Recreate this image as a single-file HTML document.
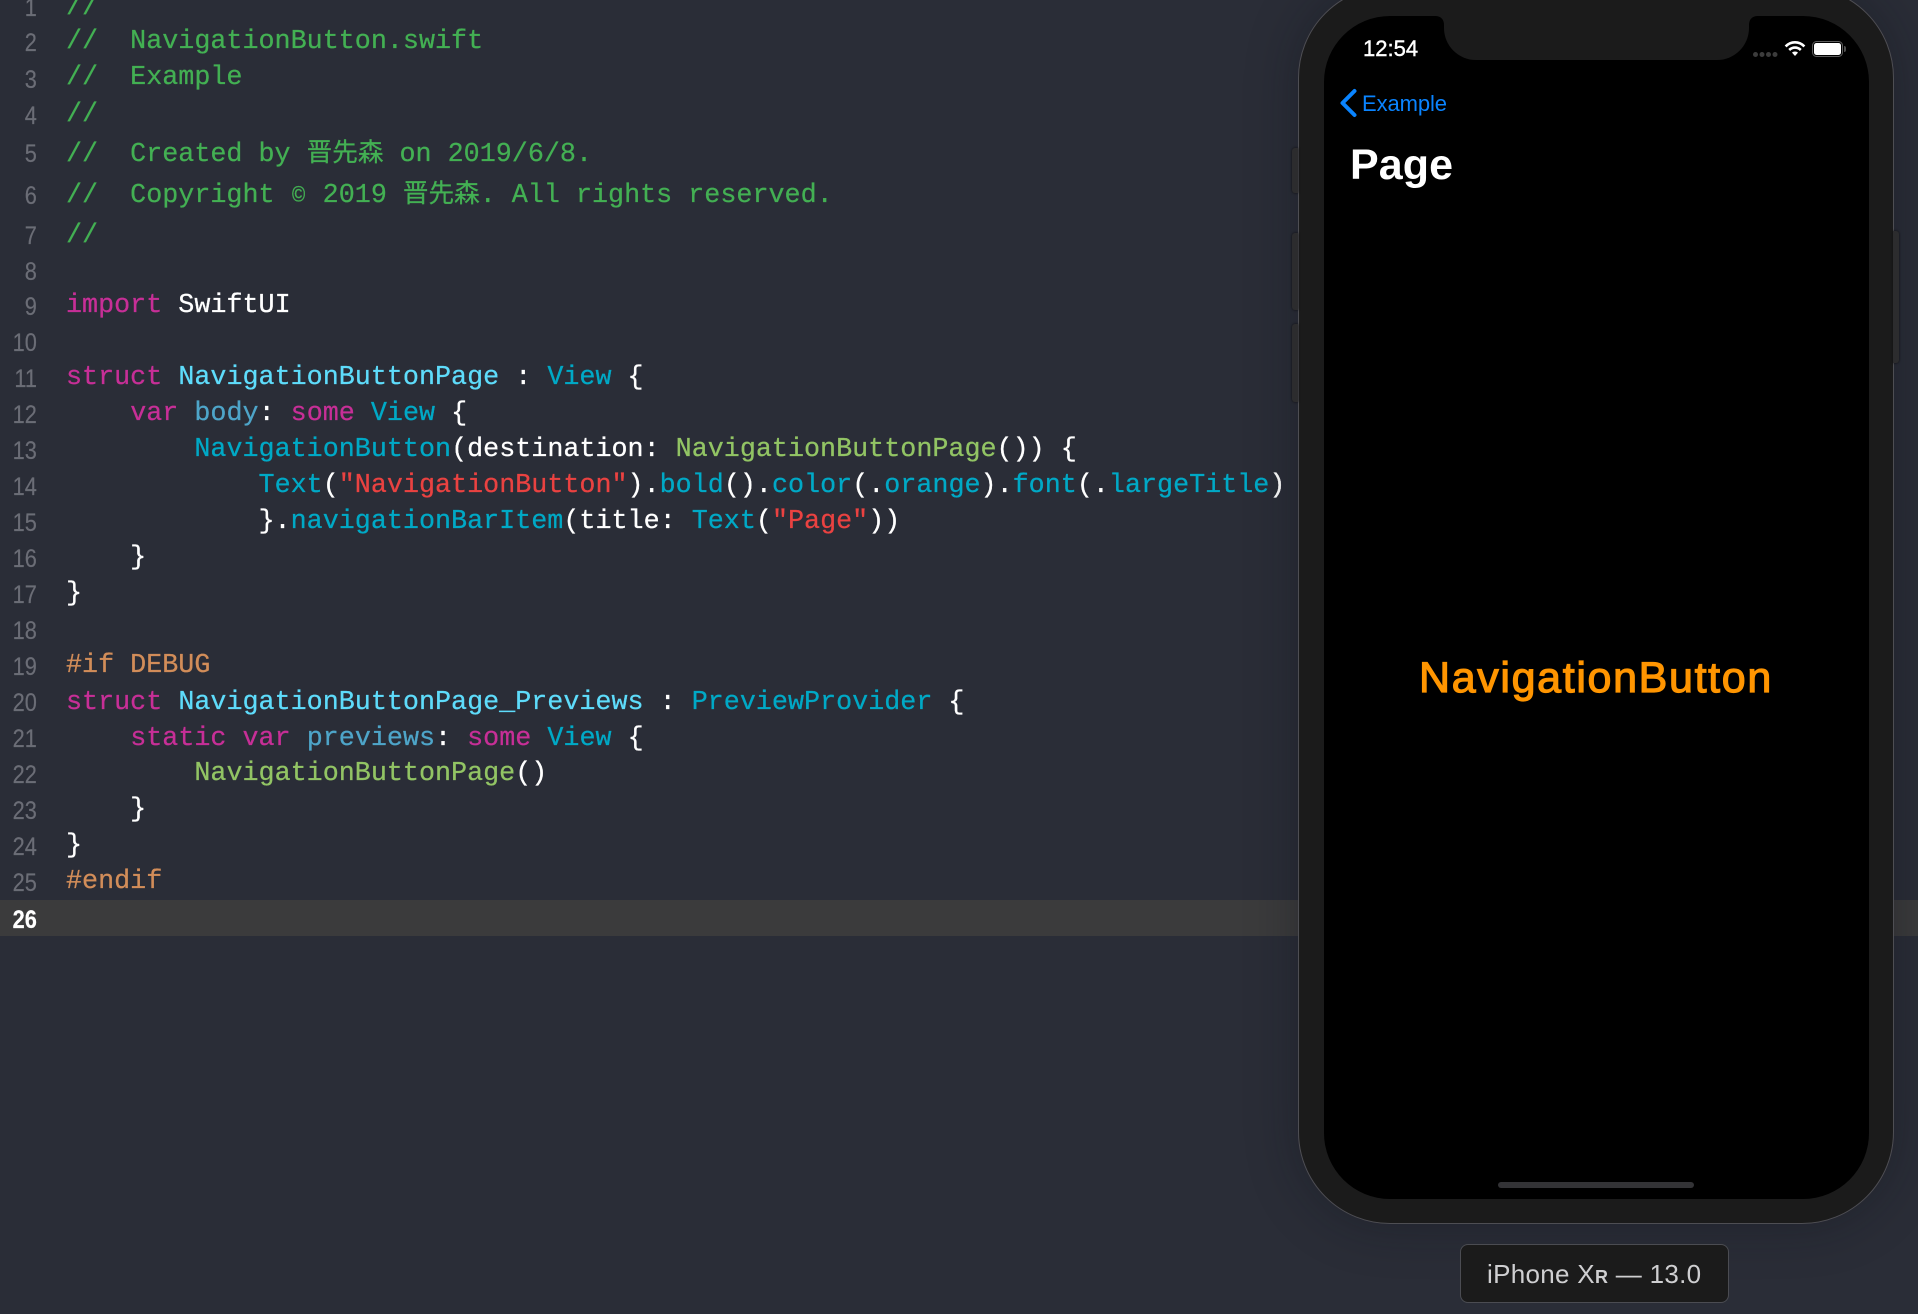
<!DOCTYPE html>
<html><head><meta charset="utf-8"><style>
html,body{margin:0;padding:0;background:#2a2d37;}
body{width:1918px;height:1314px;position:relative;overflow:hidden;font-family:"Liberation Sans","Noto Sans CJK SC",sans-serif;}
.hl{position:absolute;left:0;top:900px;width:1918px;height:36px;background:#3b3b3c;}
.l{position:absolute;left:66px;height:36px;line-height:36px;white-space:pre;font-family:"Liberation Mono","Noto Sans CJK SC",monospace;font-size:26.74px;color:#fff;-webkit-text-stroke:.25px currentColor;}
.l i{font-style:normal;font-size:25.6px;}
.n{position:absolute;right:1881px;height:36px;line-height:36px;font-size:25px;color:#6b6d76;transform:scaleX(.87);transform-origin:right center;white-space:pre;-webkit-text-stroke:.2px currentColor;}
.c{color:#43b053}.k{color:#c72f97}.t{color:#00a9c6}.d{color:#5edcfb}.g{color:#92c464}.s{color:#ea4241}.p{color:#d28d59}.b{color:#4ea5c9}
.ab{position:absolute;}
.phone{left:1298px;top:-14px;width:596px;height:1238px;box-sizing:border-box;background:#1b1b1b;border:1px solid #4e4e53;border-radius:92px;box-shadow:0 0 50px rgba(14,16,26,.36);}
.sb{background:#2c2c2e;box-shadow:0 0 2px #0e0e10;}
.screen{left:1323.5px;top:16px;width:545.5px;height:1183px;background:#000;border-radius:66px;overflow:hidden;}
.notch{left:1443.5px;top:16px;width:305px;height:43.5px;background:#1b1b1b;border-radius:0 0 32px 32px;}
.nc{top:16px;width:9px;height:9px;}
</style></head><body>
<div class="hl"></div>

<div class="n" style="top:-10px">1</div><div class="l c" style="top:-10px">//</div>
<div class="n" style="top:25px">2</div><div class="l c" style="top:24px">//  NavigationButton.swift</div>
<div class="n" style="top:62px">3</div><div class="l c" style="top:60px">//  Example</div>
<div class="n" style="top:98px">4</div><div class="l c" style="top:97px">//</div>
<div class="n" style="top:136px">5</div><div class="l c" style="top:137px">//  Created by <i>晋先森</i> on 2019/6/8.</div>
<div class="n" style="top:178px">6</div><div class="l c" style="top:178px">//  Copyright <span style="display:inline-block;width:16.04px;text-align:center;font-size:22px;line-height:20px">©</span> 2019 <i>晋先森</i>. All rights reserved.</div>
<div class="n" style="top:218px">7</div><div class="l c" style="top:218px">//</div>
<div class="n" style="top:254px">8</div>
<div class="n" style="top:289px">9</div><div class="l" style="top:288px"><span class="k">import</span> SwiftUI</div>
<div class="n" style="top:325px">10</div>
<div class="n" style="top:361px">11</div><div class="l" style="top:360px"><span class="k">struct</span> <span class="d">NavigationButtonPage</span> : <span class="t">View</span> {</div>
<div class="n" style="top:397px">12</div><div class="l" style="top:396px">    <span class="k">var</span> <span class="b">body</span>: <span class="k">some</span> <span class="t">View</span> {</div>
<div class="n" style="top:433px">13</div><div class="l" style="top:432px">        <span class="t">NavigationButton</span>(destination: <span class="g">NavigationButtonPage</span>()) {</div>
<div class="n" style="top:469px">14</div><div class="l" style="top:468px">            <span class="t">Text</span>(<span class="s">"NavigationButton"</span>).<span class="t">bold</span>().<span class="t">color</span>(.<span class="t">orange</span>).<span class="t">font</span>(.<span class="t">largeTitle</span>)</div>
<div class="n" style="top:505px">15</div><div class="l" style="top:504px">            }.<span class="t">navigationBarItem</span>(title: <span class="t">Text</span>(<span class="s">"Page"</span>))</div>
<div class="n" style="top:541px">16</div><div class="l" style="top:540px">    }</div>
<div class="n" style="top:577px">17</div><div class="l" style="top:576px">}</div>
<div class="n" style="top:613px">18</div>
<div class="n" style="top:649px">19</div><div class="l p" style="top:648px">#if DEBUG</div>
<div class="n" style="top:685px">20</div><div class="l" style="top:685px"><span class="k">struct</span> <span class="d">NavigationButtonPage_Previews</span> : <span class="t">PreviewProvider</span> {</div>
<div class="n" style="top:721px">21</div><div class="l" style="top:721px">    <span class="k">static</span> <span class="k">var</span> <span class="b">previews</span>: <span class="k">some</span> <span class="t">View</span> {</div>
<div class="n" style="top:757px">22</div><div class="l" style="top:756px">        <span class="g">NavigationButtonPage</span>()</div>
<div class="n" style="top:793px">23</div><div class="l" style="top:792px">    }</div>
<div class="n" style="top:829px">24</div><div class="l" style="top:828px">}</div>
<div class="n" style="top:865px">25</div><div class="l p" style="top:864px">#endif</div>
<div class="n" style="top:902px;color:#fff;font-weight:bold">26</div>

<div class="ab phone"></div>
<div class="ab sb" style="left:1292px;top:148px;width:6px;height:45px;border-radius:3px 0 0 3px"></div>
<div class="ab sb" style="left:1292px;top:233px;width:6px;height:77px;border-radius:3px 0 0 3px"></div>
<div class="ab sb" style="left:1292px;top:324px;width:6px;height:78px;border-radius:3px 0 0 3px"></div>
<div class="ab sb" style="left:1893px;top:231px;width:6px;height:132px;border-radius:0 3px 3px 0"></div>

<div class="ab screen"></div>
<div class="ab notch"></div>
<svg class="ab nc" style="left:1434.5px" viewBox="0 0 9 9"><path d="M0 0H9V9C9 3.5 6 0 0 0Z" fill="#1b1b1b"/></svg>
<svg class="ab nc" style="left:1748.5px" viewBox="0 0 9 9"><path d="M9 0H0V9C0 3.5 3 0 9 0Z" fill="#1b1b1b"/></svg>

<div class="ab" style="left:1363px;top:36px;font-size:22px;line-height:26px;color:#fff;-webkit-text-stroke:.4px #fff;white-space:pre">12:54</div>
<svg class="ab" style="left:1752px;top:50px" width="28" height="9" viewBox="0 0 28 9"><g fill="#3c3c3c"><circle cx="3.5" cy="4.5" r="2.5"/><circle cx="10" cy="4.5" r="2.5"/><circle cx="16.5" cy="4.5" r="2.5"/><circle cx="23" cy="4.5" r="2.5"/></g></svg>
<svg class="ab" style="left:1784px;top:40px" width="22" height="17" viewBox="0 0 22 17"><g fill="none" stroke="#fff" stroke-width="2.6"><path d="M1.6 6.4C7 1 15 1 20.4 6.4"/><path d="M5.2 10C8.6 6.8 13.4 6.8 16.8 10"/></g><path d="M8 12.6C9.7 11.2 12.3 11.2 14 12.6L11 16Z" fill="#fff"/></svg>
<div class="ab" style="left:1812px;top:41px;width:31px;height:16px;box-sizing:border-box;border:1.5px solid #5c5c5c;border-radius:4.5px"></div>
<div class="ab" style="left:1814px;top:43px;width:27px;height:12px;background:#fff;border-radius:2.5px"></div>
<div class="ab" style="left:1844px;top:46px;width:2px;height:6px;background:#4e4e4e;border-radius:0 2px 2px 0"></div>

<svg class="ab" style="left:1338px;top:87px" width="21" height="32" viewBox="0 0 21 32"><path d="M16.5 4L4.5 16L16.5 28" fill="none" stroke="#0a84ff" stroke-width="4" stroke-linecap="round" stroke-linejoin="round"/></svg>
<div class="ab" style="left:1362px;top:90px;font-size:22px;line-height:28px;color:#0a84ff;letter-spacing:-.1px;white-space:pre">Example</div>
<div class="ab" style="left:1350px;top:141px;font-size:43px;line-height:48px;font-weight:bold;color:#fff;letter-spacing:.1px;white-space:pre">Page</div>
<div class="ab" style="left:1419px;top:653px;font-size:43px;line-height:50px;color:#ff9500;-webkit-text-stroke:1.2px #ff9500;letter-spacing:1.65px;white-space:pre">NavigationButton</div>
<div class="ab" style="left:1498px;top:1182px;width:196px;height:6px;border-radius:3px;background:#333336"></div>

<div class="ab" style="left:1460px;top:1244px;width:269px;height:59px;box-sizing:border-box;background:#1b1b1b;border:1.5px solid #4b4c52;border-radius:8px"></div>
<div class="ab" style="left:1487px;top:1258px;font-size:26px;line-height:32px;color:#cfcfd1;letter-spacing:.3px;white-space:pre">iPhone X<span style="font-size:18px;font-weight:bold">R</span> — 13.0</div>
</body></html>
